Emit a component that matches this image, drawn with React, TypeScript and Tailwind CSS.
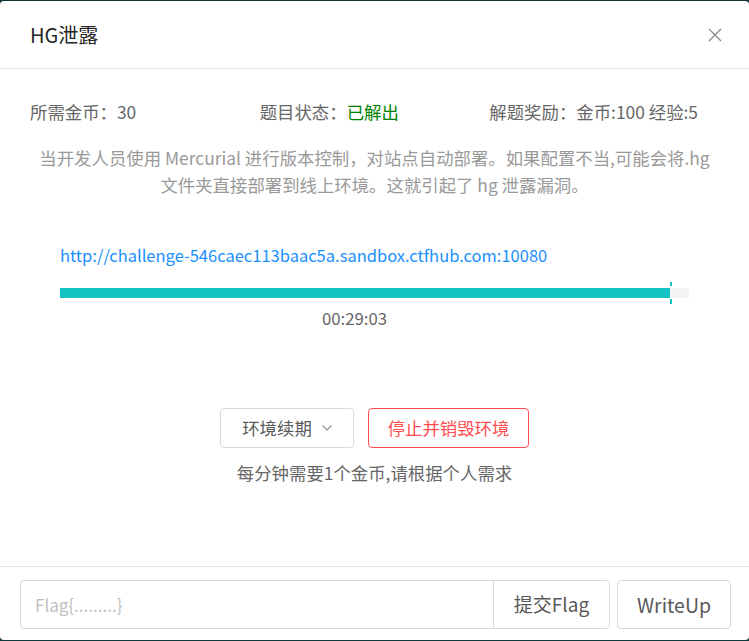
import React from 'react';

const font = { fontFamily: '"Noto Sans CJK SC", "Noto Sans", sans-serif' };

const App: React.FC = () => {
  return (
    <div className="w-[749px] h-[641px] bg-[#0e3b39] pt-px overflow-hidden" style={font}>
      <div className="h-[639px] bg-white rounded-[4px] flex flex-col">
        {/* Header */}
        <div className="h-[68px] border-b border-[#e8e8e8] flex items-center justify-between pl-[30px] pr-[27px] shrink-0">
          <span className="text-[20px] text-[#262626]">HG泄露</span>
          <svg width="14" height="14" viewBox="0 0 14 14" className="text-[#8c8c8c]">
            <path d="M1 1 L13 13 M13 1 L1 13" stroke="currentColor" strokeWidth="1.4" fill="none" />
          </svg>
        </div>

        {/* Body */}
        <div className="flex-1 flex flex-col">
          <div className="grid grid-cols-3 px-[30px] pt-[31px] text-[17.4px] leading-[24px] text-[#666]">
            <div>所需金币：30</div>
            <div>
              题目状态：<span className="text-[#008000]">已解出</span>
            </div>
            <div className="whitespace-nowrap">解题奖励：金币:100 经验:5</div>
          </div>

          <p className="mt-[20px] px-[20px] text-center text-[17.4px] leading-[27px] text-[#999] whitespace-nowrap">
            当开发人员使用 Mercurial 进行版本控制，对站点自动部署。如果配置不当,可能会将.hg
            <br />
            文件夹直接部署到线上环境。这就引起了 hg 泄露漏洞。
          </p>

          <div className="mt-[45px] px-[60px]">
            <a className="text-[16.5px] leading-[24px] text-[#1890ff]">
              http://challenge-546caec113baac5a.sandbox.ctfhub.com:10080
            </a>
            <div className="relative mt-[21px] h-[10px] bg-[#f3f3f3]">
              <div className="h-full w-[610px] bg-[#13c2c2]" />
              <div className="absolute left-[610px] top-[-6px] w-[2px] h-[4px] bg-[#13c2c2]" />
              <div className="absolute left-[610px] top-[11px] w-[2px] h-[5px] bg-[#13c2c2]" />
            </div>
            <div className="mt-[8px] pr-[40px] text-center text-[16.8px] leading-[24px] text-[#666]">00:29:03</div>
          </div>

          <div className="mt-[78px] flex justify-center gap-[14px]">
            <button className="w-[134px] h-[40px] rounded-[4px] border border-[#d9d9d9] bg-white text-[17.4px] text-[#595959] flex items-center justify-center gap-[10px]">
              环境续期
              <svg width="10" height="6" viewBox="0 0 10 6">
                <path d="M0.5 0.5 L5 5 L9.5 0.5" stroke="#8c8c8c" strokeWidth="1.1" fill="none" />
              </svg>
            </button>
            <button className="w-[161px] h-[40px] rounded-[4px] border border-[#ff4d4f] bg-white text-[17.4px] text-[#ff4d4f]">
              停止并销毁环境
            </button>
          </div>
          <div className="mt-[13px] text-center text-[17.4px] leading-[24px] text-[#666]">
            每分钟需要1个金币,请根据个人需求
          </div>
        </div>

        {/* Footer */}
        <div className="border-t border-[#e8e8e8] pt-[13px] pb-[11px] pl-[20px] pr-[18px] flex gap-[7px] shrink-0">
          <div className="flex-1 h-[49px] flex rounded-[4px] border border-[#d9d9d9] overflow-hidden">
            <input
              className="flex-1 min-w-0 px-[14px] text-[17px] outline-none placeholder:text-[#bfbfbf]"
              placeholder="Flag{.........}"
              style={font}
            />
            <button className="w-[116px] border-l border-[#d9d9d9] text-[19px] text-[#595959]">提交Flag</button>
          </div>
          <button className="w-[114px] h-[49px] rounded-[4px] border border-[#d9d9d9] text-[19.5px] text-[#595959]">
            WriteUp
          </button>
        </div>
      </div>
    </div>
  );
};

export default App;
